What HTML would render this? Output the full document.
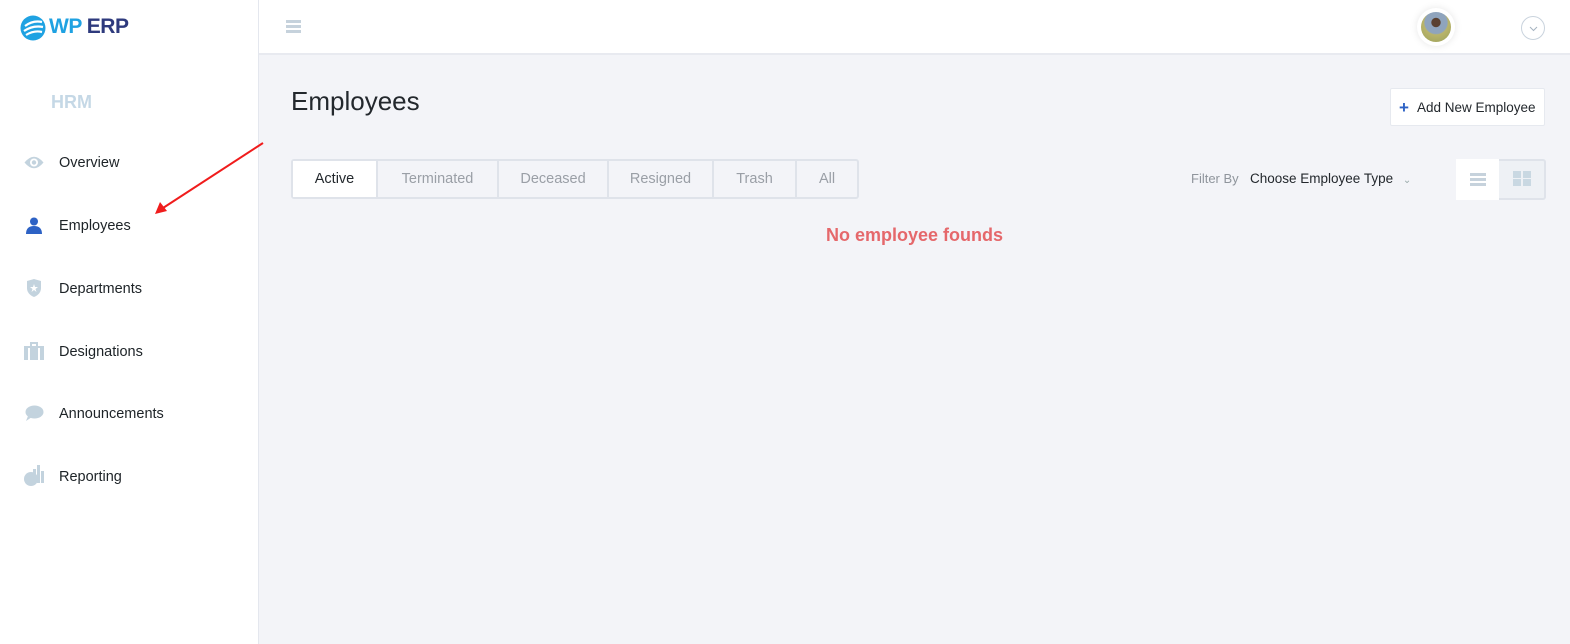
<!DOCTYPE html>
<html><head><style>
*{margin:0;padding:0;box-sizing:border-box}
body{width:1570px;height:644px;background:#f3f4f8;font-family:"Liberation Sans",sans-serif;position:relative;overflow:hidden;color:#23282d}
.sb{position:absolute;left:0;top:0;width:259px;height:644px;background:#fff;border-right:1px solid #e4e7ee}
.top{position:absolute;left:259px;top:0;right:0;height:55px;background:#fff;border-bottom:2px solid #e8eaf0}
.nav{position:absolute;left:59px;font-size:14.5px;color:#1d2327}
.ic{position:absolute;left:24px}
.tabs{position:absolute;left:291px;top:159px;height:40px;display:flex;border:2px solid #dfe3ea;border-radius:3px;background:#f3f4f8}
.tabs div{height:36px;line-height:36px;font-size:14.5px;color:#9a9fa6;text-align:center;border-right:2px solid #dfe3ea}
.tabs div:last-child{border-right:none}
</style></head><body>
<div class="sb">
 <svg style="position:absolute;left:20px;top:14px" width="26" height="28" viewBox="0 0 26 28"><circle cx="13" cy="14" r="12.5" fill="#1fa2e2"/><path d="M5 12 Q13 6 22 8 M4 17 Q13 11 23 13 M6 21 Q14 16 22 18" stroke="#fff" stroke-width="2.2" fill="none"/></svg>
 <div style="position:absolute;left:49px;top:15px;font-size:21px;font-weight:bold;letter-spacing:-0.5px"><span style="color:#1fa2e2">WP</span> <span style="color:#2e3a7d">ERP</span></div>
 <div style="position:absolute;left:51px;top:92px;font-size:18px;font-weight:bold;color:#c5d8e6">HRM</div>
 <svg class="ic" style="top:155px" width="20" height="15" viewBox="0 0 20 15"><path d="M0.5 7.5 Q10 -4 19.5 7.5 Q10 19 0.5 7.5Z" fill="#c3d3de"/><circle cx="10" cy="7.5" r="4" fill="#fff"/><circle cx="10" cy="7.5" r="2.2" fill="#c3d3de"/></svg>
 <div class="nav" style="top:155px">Overview</div>
 <svg class="ic" style="top:217px;left:26px" width="16" height="17" viewBox="0 0 16 17"><circle cx="8" cy="4.5" r="4" fill="#2d62c5"/><path d="M0 17 Q0 9 8 9 Q16 9 16 17Z" fill="#2d62c5"/></svg>
 <div class="nav" style="top:218px">Employees</div>
 <svg class="ic" style="top:279px;left:26px" width="16" height="18" viewBox="0 0 16 18"><path d="M1 2 L8 0 L15 2 L15 9 Q15 15 8 18 Q1 15 1 9Z" fill="#c3d3de"/><path d="M8 5 L9 8 L12 8 L9.5 10 L10.5 13 L8 11 L5.5 13 L6.5 10 L4 8 L7 8Z" fill="#fff"/></svg>
 <div class="nav" style="top:281px">Departments</div>
 <svg class="ic" style="top:342px" width="20" height="18" viewBox="0 0 20 18"><path d="M7 4 V1 H13 V4" stroke="#c3d3de" stroke-width="2" fill="none"/><rect x="0" y="4" width="20" height="14" fill="#c3d3de"/><rect x="4" y="6" width="2" height="12" fill="#fff"/><rect x="14" y="6" width="2" height="12" fill="#fff"/></svg>
 <div class="nav" style="top:344px">Designations</div>
 <svg class="ic" style="top:405px;left:25px" width="19" height="16" viewBox="0 0 19 16"><ellipse cx="9.5" cy="7" rx="9" ry="6.5" fill="#c3d3de"/><path d="M3 11 L1 16 L7 12Z" fill="#c3d3de"/></svg>
 <div class="nav" style="top:406px">Announcements</div>
 <svg class="ic" style="top:465px" width="22" height="22" viewBox="0 0 22 22"><circle cx="7" cy="14" r="7" fill="#c3d3de"/><rect x="9" y="4" width="3" height="14" fill="#c3d3de"/><rect x="13" y="0" width="3" height="18" fill="#c3d3de"/><rect x="17" y="6" width="3" height="12" fill="#c3d3de"/></svg>
 <div class="nav" style="top:469px">Reporting</div>
</div>
<div class="top">
 <svg style="position:absolute;left:27px;top:20px" width="15" height="13"><rect y="0" width="15" height="3" fill="#c6d2dc"/><rect y="5" width="15" height="3" fill="#c6d2dc"/><rect y="10" width="15" height="3" fill="#c6d2dc"/></svg>
 <div style="position:absolute;left:1158px;top:8px;width:38px;height:38px;border-radius:50%;background:#fff;box-shadow:0 0 8px rgba(0,0,0,.1)"><div style="position:absolute;left:4px;top:4px;width:30px;height:30px;border-radius:50%;background:radial-gradient(circle at 50% 35%,#5a4030 0 18%,#8fa4bd 20% 45%,#b9b46a 50%,#9aa05a 100%)"></div></div>
 <div style="position:absolute;left:1262px;top:16px;width:24px;height:24px;border-radius:50%;border:1px solid #c9d3dd"><svg style="position:absolute;left:7px;top:9px" width="9" height="6"><path d="M1 1 L4.5 4.5 L8 1" stroke="#a5b3c0" fill="none"/></svg></div>
</div>
<div style="position:absolute;left:291px;top:86px;font-size:26px;color:#23282d">Employees</div>
<div style="position:absolute;left:1390px;top:88px;width:155px;height:38px;background:#fff;border:1px solid #e6e9ef;border-radius:2px;font-size:13.5px;line-height:38px;padding-left:26px;color:#23282d"><span style="position:absolute;left:8px;top:0;color:#2d62c5;font-weight:bold;font-size:17px">+</span>Add New Employee</div>
<div class="tabs">
 <div style="width:85px;background:#fff;color:#23282d">Active</div>
 <div style="width:121px">Terminated</div>
 <div style="width:110px">Deceased</div>
 <div style="width:105px">Resigned</div>
 <div style="width:83px">Trash</div>
 <div style="width:60px">All</div>
</div>
<div style="position:absolute;left:1191px;top:171px;font-size:13px;color:#8f959c">Filter By</div>
<div style="position:absolute;left:1250px;top:171px;font-size:13.5px;color:#23282d">Choose Employee Type <span style="color:#9aa;font-size:10px;margin-left:6px">&#8964;</span></div>
<div style="position:absolute;left:1456px;top:159px;width:90px;height:41px;border:2px solid #dfe3ea;border-radius:3px;background:#eef1f5"></div>
<div style="position:absolute;left:1456px;top:159px;width:43px;height:41px;background:#fff"><svg style="position:absolute;left:14px;top:14px" width="16" height="13"><rect y="0" width="16" height="3" fill="#c6d2dc"/><rect y="5" width="16" height="3" fill="#c6d2dc"/><rect y="10" width="16" height="3" fill="#c6d2dc"/></svg></div>
<svg style="position:absolute;left:1513px;top:171px" width="18" height="15"><rect x="0" y="0" width="8" height="7" fill="#c9d8e2"/><rect x="10" y="0" width="8" height="7" fill="#c9d8e2"/><rect x="0" y="8" width="8" height="7" fill="#c9d8e2"/><rect x="10" y="8" width="8" height="7" fill="#c9d8e2"/></svg>
<div style="position:absolute;left:826px;top:225px;font-size:18px;font-weight:bold;color:#e5686b">No employee founds</div>
<svg style="position:absolute;left:0;top:0" width="300" height="260"><line x1="263" y1="143" x2="163" y2="208" stroke="#f01c1c" stroke-width="2"/><path d="M155 214 L160 202 L167 211Z" fill="#f01c1c"/></svg>
</body></html>
